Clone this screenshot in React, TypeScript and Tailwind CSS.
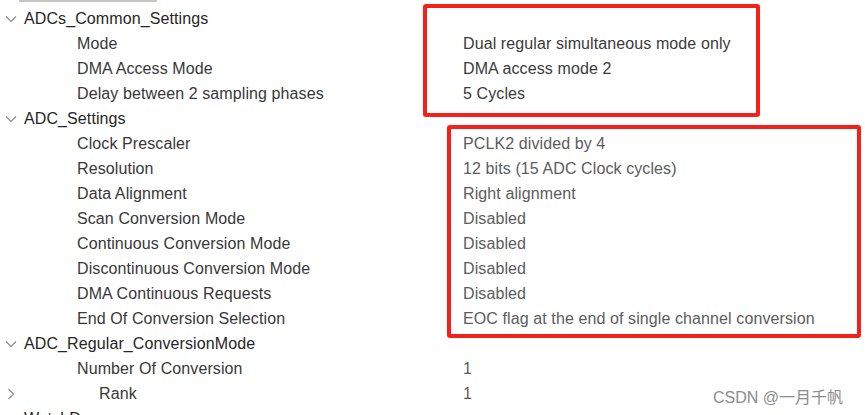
type Row = {
  label: string;
  value?: string;
  level: 0 | 1 | 2;
  toggle?: "open" | "closed";
  muted?: boolean;
};

const rows: Row[] = [
  { label: "ADCs_Common_Settings", level: 0, toggle: "open" },
  { label: "Mode", value: "Dual regular simultaneous mode only", level: 1 },
  { label: "DMA Access Mode", value: "DMA access mode 2", level: 1 },
  { label: "Delay between 2 sampling phases", value: "5 Cycles", level: 1 },
  { label: "ADC_Settings", level: 0, toggle: "open" },
  { label: "Clock Prescaler", value: "PCLK2 divided by 4", level: 1, muted: true },
  { label: "Resolution", value: "12 bits (15 ADC Clock cycles)", level: 1, muted: true },
  { label: "Data Alignment", value: "Right alignment", level: 1, muted: true },
  { label: "Scan Conversion Mode", value: "Disabled", level: 1, muted: true },
  { label: "Continuous Conversion Mode", value: "Disabled", level: 1, muted: true },
  { label: "Discontinuous Conversion Mode", value: "Disabled", level: 1, muted: true },
  { label: "DMA Continuous Requests", value: "Disabled", level: 1, muted: true },
  { label: "End Of Conversion Selection", value: "EOC flag at the end of single channel conversion", level: 1, muted: true },
  { label: "ADC_Regular_ConversionMode", level: 0, toggle: "open" },
  { label: "Number Of Conversion", value: "1", level: 1, muted: true },
  { label: "Rank", value: "1", level: 2, toggle: "closed", muted: true },
  { label: "WatchDog", level: 0, toggle: "open" },
];

// label indent after the 24px toggle column
const indent = ["pl-0", "pl-[53px]", "pl-[75px]"];

const Chevron = ({ open }: { open: boolean }) => (
  <svg width="12" height="12" viewBox="0 0 12 12" className="text-[#8a8a8a]">
    {open ? (
      <path d="M1 3.5 L6 8.5 L11 3.5" fill="none" stroke="currentColor" strokeWidth="1.1" />
    ) : (
      <path d="M3.5 1 L8.5 6 L3.5 11" fill="none" stroke="currentColor" strokeWidth="1.1" />
    )}
  </svg>
);

const App = () => {
  return (
    <div className="relative w-[865px] h-[415px] overflow-hidden bg-white font-['Liberation_Sans',Arial,sans-serif] text-[16px]">
      <div className="ml-[19px] w-[138px] h-[2px] bg-[#c4c4c4]" />
      <div className="flex flex-col pt-[4px]">
        {rows.map((row, i) => (
          <div key={i} className="flex h-[25px] leading-[25px] items-center">
            <span className="w-[24px] shrink-0 flex pl-[5px]">
              {row.toggle && <Chevron open={row.toggle === "open"} />}
            </span>
            <span
              className={`w-[439px] shrink-0 whitespace-nowrap tracking-[0.1px] ${indent[row.level]} ${
                row.level === 0 ? "text-[#262626]" : "text-[#383838]"
              }`}
            >
              {row.label}
            </span>
            {row.value && (
              <span
                className={`whitespace-nowrap tracking-[0.1px] ${row.muted ? "text-[#5c5c5c]" : "text-[#3a3a3a]"}`}
              >
                {row.value}
              </span>
            )}
          </div>
        ))}
      </div>

      {/* annotation boxes */}
      <div className="absolute left-[423px] top-[4px] w-[337px] h-[113px] border-[4px] border-[#f5201a] rounded-[3px]" />
      <div className="absolute left-[447px] top-[125px] w-[414px] h-[213px] border-[4px] border-[#f5201a] rounded-[3px]" />

      <div className="absolute left-[713px] top-[386px] text-[16px] text-[#8c8c8c] font-['Liberation_Sans','Noto_Sans_CJK_SC',sans-serif]">
        CSDN @一月千帆
      </div>
    </div>
  );
};

export default App;
